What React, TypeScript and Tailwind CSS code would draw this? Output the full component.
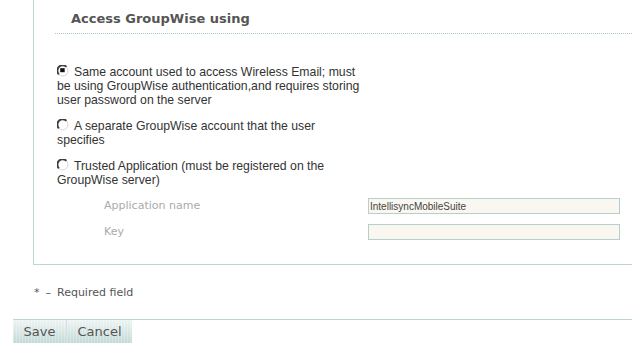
import React from "react";

function Radio({ checked }: { checked?: boolean }) {
  // old-style GTK radio/checkbox look
  return (
    <svg width="12" height="12" viewBox="0 0 12 12" className="inline-block align-[-1px] mr-[5px]">
      <circle cx="6" cy="6" r="5.2" fill="#fff" />
      <path d="M1.9 9.4 A5 5 0 0 1 9.4 1.9" fill="none" stroke="#3c3c3c" strokeWidth="2" />
      <path d="M9.4 1.9 A5 5 0 0 1 1.9 9.4" fill="none" stroke="#d4d4d4" strokeWidth="1" />
      {checked && <rect x="3.2" y="3.2" width="4.5" height="4" fill="#111" />}
    </svg>
  );
}

const options = [
  {
    checked: true,
    first: "Same account used to access Wireless Email; must",
    rest: "be using GroupWise authentication,and requires storing user password on the server",
  },
  { checked: false, first: "A separate GroupWise account that the user", rest: "specifies" },
  { checked: false, first: "Trusted Application (must be registered on the", rest: "GroupWise server)" },
];

export default function App() {
  return (
    <div className="w-[632px] h-[357px] bg-white overflow-hidden font-['DejaVu_Sans',sans-serif]">
      {/* fieldset */}
      <div className="ml-[33px] h-[265px] border-l border-b border-[#bcd6d2]">
        <h2 className="pl-[37px] pt-[11px] text-[13px] leading-[16px] font-bold text-[#555]">
          Access GroupWise using
        </h2>
        <div className="ml-[21px] mt-[6px] border-b border-dotted border-[#a9c9c4]" />

        <div className="pl-[23px] pt-[31px] w-[335px] font-['Liberation_Sans',Arial,sans-serif] text-[12.25px] leading-[14px] text-[#333] flex flex-col gap-[12px]">
          {options.map((o) => (
            <div key={o.first}>
              <Radio checked={o.checked} />
              {o.first}
              <br />
              {o.rest}
            </div>
          ))}
        </div>

        <div className="mt-[11px] flex flex-col gap-[10px] text-[11px] text-[#aaa]">
          <div className="flex items-center h-[16px]">
            <span className="pl-[70px] w-[334px]">Application name</span>
            <input
              readOnly
              value="IntellisyncMobileSuite"
              className="w-[252px] h-[16px] border border-[#b4d0cc] bg-[#faf7f0] px-[1px] text-[10px] text-[#444] font-['Liberation_Sans',Arial,sans-serif] outline-none"
            />
          </div>
          <div className="flex items-center h-[16px]">
            <span className="pl-[70px] w-[334px]">Key</span>
            <input
              readOnly
              value=""
              className="w-[252px] h-[16px] border border-[#b4d0cc] bg-[#faf7f0] outline-none"
            />
          </div>
        </div>
      </div>

      <p className="ml-[34px] mt-[21px] text-[11px] leading-[14px] text-[#555]">
        *<span className="ml-[6px] mr-[6px]">–</span>Required field
      </p>

      {/* button bar */}
      <div className="ml-[13px] mt-[19px] border-t border-[#bcd6d2] flex">
        <button className="h-[23px] w-[54px] border-r border-[#d0e2df] bg-[repeating-linear-gradient(90deg,rgba(255,255,255,0.25)_0px,rgba(255,255,255,0.25)_1px,transparent_1px,transparent_3px),linear-gradient(#eef4f3,#c3dad6)] text-[13px] text-[#555]">
          Save
        </button>
        <button className="h-[23px] w-[65px] bg-[repeating-linear-gradient(90deg,rgba(255,255,255,0.25)_0px,rgba(255,255,255,0.25)_1px,transparent_1px,transparent_3px),linear-gradient(#eef4f3,#c3dad6)] text-[13px] text-[#555]">
          Cancel
        </button>
      </div>
    </div>
  );
}
